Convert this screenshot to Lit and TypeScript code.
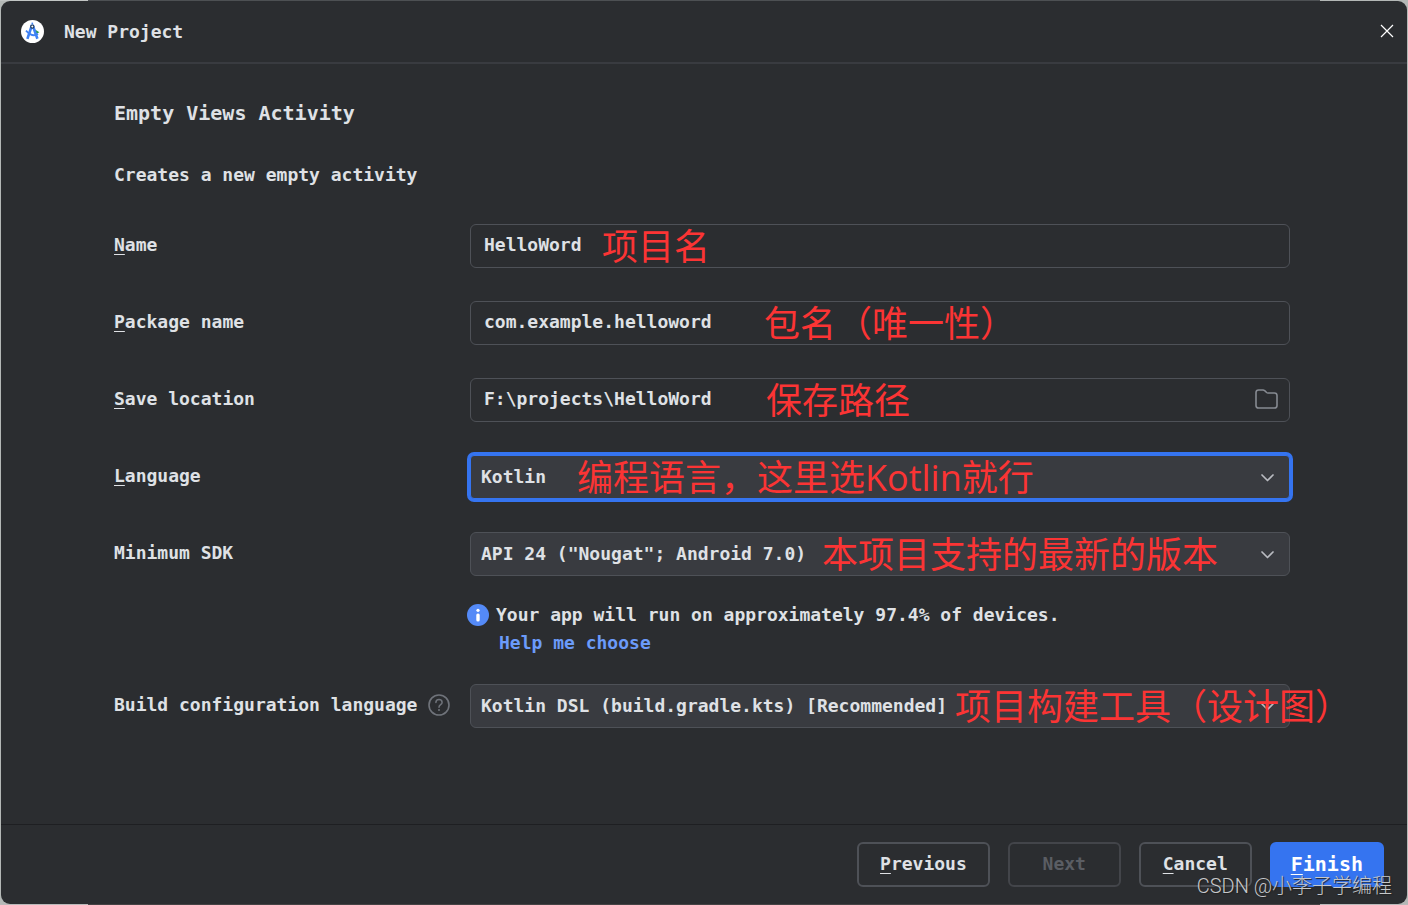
import { LitElement, html, css, svg, nothing } from "lit";
import { customElement, property } from "lit/decorators.js";

const chevron = svg`<path d="M2 2 L7.5 7.5 L13 2" fill="none" stroke="#b9bbc1" stroke-width="1.7" stroke-linecap="round" stroke-linejoin="round"/>`;

@customElement("form-row")
class FormRow extends LitElement {
  @property() label = "";
  @property() value = "";
  @property() note = "";
  @property({ type: Number }) noteStart = 0;
  @property({ type: Boolean }) mnemonic = false;
  @property({ type: Boolean }) dropdown = false;
  @property({ type: Boolean }) active = false;
  @property({ type: Boolean }) browse = false;
  @property({ type: Boolean }) help = false;

  static styles = css`
    :host { display: grid; grid-template-columns: 356px minmax(0, 1fr); align-items: center; }
    * { box-sizing: border-box; }
    .caption { display: flex; align-items: center; gap: 11px; padding-bottom: 2px; white-space: nowrap; }
    .mnemonic { text-decoration: underline; text-decoration-thickness: 1px; text-underline-offset: 3px; }
    .field { position: relative; height: 44px; }
    .control {
      display: block; width: 100%; height: 44px; margin: 0; padding: 0 50px 4px 13px;
      font: inherit; color: #dfe1e5; background: #2b2d30;
      border: 1px solid #4e5157; border-radius: 6px; outline: none; appearance: none;
    }
    .dropdown { padding: 0 0 1px 10px; background: #393b40; }
    .active { border-color: #3574f0; box-shadow: 0 0 0 3px #3574f0; border-radius: 4px; }
    .chevron { position: absolute; right: 14px; top: 18px; width: 16px; height: 10px; pointer-events: none; }
    .browse { position: absolute; right: 11px; top: 10px; width: 25px; height: 23px; padding: 0; border: 0; background: none; }
    .browse svg { display: block; }
    .help { width: 22px; height: 22px; padding: 0; border: 0; background: none; }
    .help svg { display: block; }
    .note {
      position: absolute; left: 0; top: 0; height: 44px; line-height: 46px; white-space: nowrap;
      font-family: "Open Sans", "Noto Sans CJK SC", sans-serif; font-size: 36px; font-weight: 400;
      color: #fb3434; pointer-events: none;
    }
  `;

  render() {
    const rest = this.mnemonic ? this.label.slice(1) : this.label;
    return html`
      <div class="caption">
        <label for="control">${this.mnemonic ? html`<span class="mnemonic">${this.label[0]}</span>` : nothing}${rest}</label>
        ${this.help
          ? html`<button class="help" aria-label="Help">
              <svg width="22" height="22" viewBox="0 0 22 22">
                <circle cx="11" cy="11" r="10" fill="none" stroke="#6f737a" stroke-width="1.6" />
                <path d="M7.9 8.6 C7.9 6.6 9.2 5.5 11 5.5 S14.1 6.6 14.1 8.4 C14.1 10.7 11 10.7 11 13.2" fill="none" stroke="#6f737a" stroke-width="1.5" stroke-linecap="round" />
                <circle cx="11" cy="15.9" r="1" fill="#6f737a" />
              </svg>
            </button>`
          : nothing}
      </div>
      <div class="field">
        ${this.dropdown
          ? html`<select id="control" class="control dropdown ${this.active ? "active" : ""}">
                <option>${this.value}</option>
              </select>
              <svg class="chevron" viewBox="0 0 16 10">${chevron}</svg>`
          : html`<input id="control" class="control" type="text" spellcheck="false" .value=${this.value} />`}
        ${this.browse
          ? html`<button class="browse" aria-label="Browse">
              <svg width="25" height="23" viewBox="0 0 25 23">
                <path d="M2 4.6 Q2 2 4.6 2 H9 Q10 2 10.7 2.7 L12.6 4.5 Q13.2 5 14 5 H20.4 Q23 5 23 7.6 V17.4 Q23 20 20.4 20 H4.6 Q2 20 2 17.4 Z" fill="none" stroke="#868a91" stroke-width="1.6" />
              </svg>
            </button>`
          : nothing}
        <span class="note" style="left:${this.noteStart}px">${this.note}</span>
      </div>
    `;
  }
}

@customElement("app-root")
class AppRoot extends LitElement {
  static styles = css`
    :host {
      display: flex; box-sizing: border-box; min-height: 100vh; padding: 1px;
      background:
        linear-gradient(90deg, #c2c5c4 88px, #4d5053 88px, #4d5053 calc(100% - 88px), #b4b8b6 calc(100% - 88px)) 0 0 / 100% 1px no-repeat,
        linear-gradient(90deg, #bababa 88px, #454244 88px, #454244 calc(100% - 88px), #bababa calc(100% - 88px)) 0 100% / 100% 1px no-repeat,
        #b4b8b6;
      font-family: "DejaVu Sans Mono", monospace; font-size: 18px; line-height: 28px; font-weight: 700;
      color: #dfe1e5;
    }
    * { box-sizing: border-box; }
    .dialog { flex: 1; min-width: 0; display: flex; flex-direction: column; position: relative; background: #2b2d30; border-radius: 9px; }
    .titlebar { display: flex; align-items: center; height: 63px; padding: 0 12px 0 19px; border-bottom: 2px solid #393b40; }
    .logo { margin-right: 19px; }
    .title { flex: 1; margin: 0; font: inherit; }
    .close { width: 16px; height: 16px; padding: 0; border: 0; background: none; }
    .close svg, .logo { display: block; }
    .body { flex: 1; padding: 35px 117px 40px 113px; }
    .heading { margin: 0; font-size: 20px; line-height: 28px; }
    .lead { margin: 34px 0 35px; }
    .form { display: flex; flex-direction: column; gap: 33px; }
    .hint { display: grid; grid-template-columns: 22px 1fr; column-gap: 7px; margin: 25px 0 27px 353px; align-items: center; }
    .hint svg { display: block; }
    .link { grid-column: 2; justify-self: start; margin-left: 3px; color: #6b9bfa; text-decoration: none; }
    .footer { display: flex; justify-content: flex-end; gap: 18px; padding: 17px 23px; border-top: 1px solid #1e1f22; }
    .button {
      height: 45px; min-width: 113px; padding: 0 21px 2px; font: inherit; color: #dfe1e5;
      background: none; border: 2px solid #4e5157; border-radius: 6px;
    }
    .button:disabled { color: #5a5d63; border-color: #43454a; }
    .primary { padding: 0 19px 2px; font-size: 20px; color: #fff; background: #3574f0; border-color: #3574f0; }
    .mnemonic { text-decoration: underline; text-decoration-thickness: 1px; text-underline-offset: 3px; }
    .watermark {
      position: absolute; right: 15px; bottom: 4px; font-family: "Roboto", "Noto Sans CJK SC", sans-serif;
      font-size: 20px; font-weight: 300; color: #c6c8cb; text-shadow: 1px 1px 1px #222; pointer-events: none;
    }
  `;

  render() {
    return html`
      <div class="dialog" role="dialog" aria-labelledby="title">
        <header class="titlebar">
          <svg class="logo" width="25" height="25" viewBox="0 0 25 25">
            <circle cx="12.5" cy="12.5" r="11.5" fill="#fff" />
            <path d="M14.6 10.2 L19.4 13.2 L15 15.6 Z" fill="#2b9a4c" />
            <path d="M6 11.6 Q12.5 18.8 18 14.8" fill="none" stroke="#3f82f5" stroke-width="1.8" />
            <path d="M12 6 L7.4 19.8 M12.6 6 L17.4 19.8" stroke="#3f82f5" stroke-width="2.6" fill="none" />
            <path d="M12.3 3.6 V5.6" stroke="#3f82f5" stroke-width="1.6" />
            <circle cx="12.3" cy="7.6" r="1.6" fill="#fff" stroke="#223c5c" stroke-width="1.2" />
          </svg>
          <h1 class="title" id="title">New Project</h1>
          <button class="close" aria-label="Close">
            <svg width="16" height="16" viewBox="0 0 16 16"><path d="M2 1 L14 13 M14 1 L2 13" stroke="#fff" stroke-width="1.2" /></svg>
          </button>
        </header>
        <main class="body">
          <h2 class="heading">Empty Views Activity</h2>
          <p class="lead">Creates a new empty activity</p>
          <div class="form">
            <form-row label="Name" mnemonic value="HelloWord" note="项目名" .noteStart=${132}></form-row>
            <form-row label="Package name" mnemonic value="com.example.helloword" note="包名（唯一性）" .noteStart=${294}></form-row>
            <form-row label="Save location" mnemonic value="F:\\projects\\HelloWord" browse note="保存路径" .noteStart=${296}></form-row>
            <form-row label="Language" mnemonic value="Kotlin" dropdown active note="编程语言，这里选Kotlin就行" .noteStart=${107}></form-row>
            <form-row label="Minimum SDK" value='API 24 ("Nougat"; Android 7.0)' dropdown note="本项目支持的最新的版本" .noteStart=${352}></form-row>
          </div>
          <div class="hint">
            <svg width="22" height="22" viewBox="0 0 22 22">
              <circle cx="11" cy="11" r="11" fill="#548af7" />
              <circle cx="11" cy="6.3" r="1.6" fill="#fff" />
              <rect x="9.3" y="9.4" width="3.4" height="8" rx="1.5" fill="#fff" />
            </svg>
            <span>Your app will run on approximately 97.4% of devices.</span>
            <a class="link" href="#">Help me choose</a>
          </div>
          <form-row label="Build configuration language" help value="Kotlin DSL (build.gradle.kts) [Recommended]" dropdown note="项目构建工具（设计图）" .noteStart=${485}></form-row>
        </main>
        <footer class="footer">
          <button class="button"><span class="mnemonic">P</span>revious</button>
          <button class="button" disabled>Next</button>
          <button class="button"><span class="mnemonic">C</span>ancel</button>
          <button class="button primary"><span class="mnemonic">F</span>inish</button>
        </footer>
        <div class="watermark">CSDN @小李子学编程</div>
      </div>
    `;
  }
}
